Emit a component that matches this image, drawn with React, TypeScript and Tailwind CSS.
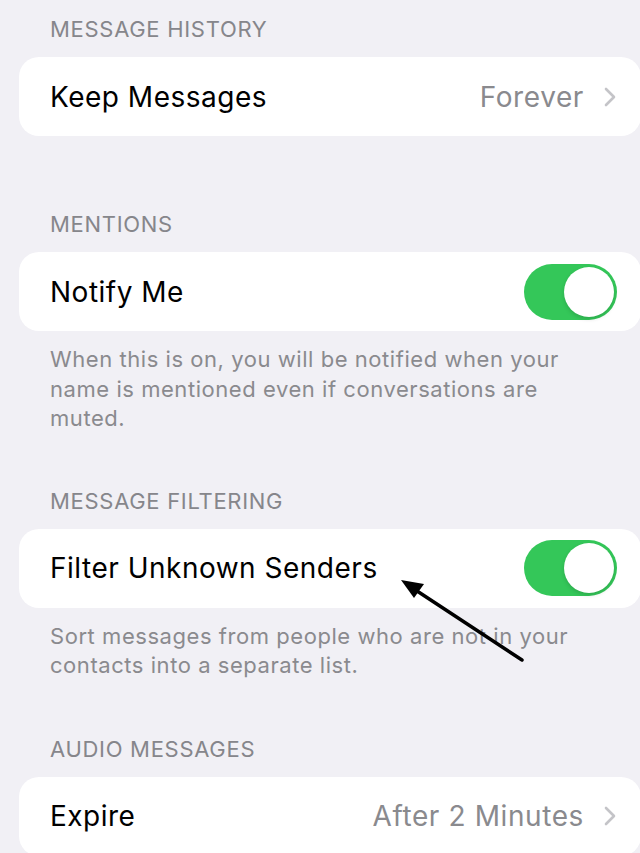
import React from "react";

type RowProps = {
  label: string;
  value?: string;
  toggle?: boolean;
};

function Chevron() {
  return (
    <svg width="13" height="20" viewBox="0 0 13 20" className="ml-[20px]">
      <polyline
        points="2,2 10,10 2,18"
        fill="none"
        stroke="#c4c4c8"
        strokeWidth="2.6"
        strokeLinecap="round"
        strokeLinejoin="round"
      />
    </svg>
  );
}

function Toggle() {
  return (
    <div className="w-[93px] h-[56px] rounded-full bg-[#34c759] p-[3px] flex justify-end">
      <div className="w-[50px] h-[50px] rounded-full bg-white shadow-[0_2px_4px_rgba(0,0,0,0.15)]" />
    </div>
  );
}

function Row({ label, value, toggle }: RowProps) {
  return (
    <div className="h-[79px] ml-[19px] -mr-[1px] bg-white rounded-[20px] flex items-center pl-[31px] pr-[24px]">
      <span className="flex-1 text-[28px] text-black tracking-[0.5px]">{label}</span>
      {value && (
        <span className="flex items-center text-[28px] text-[#8a8a8e] tracking-[0.6px]">
          {value}
          <Chevron />
        </span>
      )}
      {toggle && <Toggle />}
    </div>
  );
}

function Header({ children }: { children: React.ReactNode }) {
  return (
    <div className="pl-[50px] text-[22px] leading-[28px] tracking-[0.7px] text-[#86868b] mb-[14px]">
      {children}
    </div>
  );
}

function Footer({ children }: { children: React.ReactNode }) {
  return (
    <div className="pl-[50px] mt-[14px] text-[22px] leading-[29.5px] tracking-[0.55px] text-[#8a8a8e]">
      {children}
    </div>
  );
}

export default function App() {
  return (
    <div
      className="relative w-[640px] h-[853px] overflow-hidden bg-[#f1f0f5]"
      style={{ fontFamily: "Inter, 'Noto Sans', sans-serif" }}
    >
      <div className="pt-[15px]">
        <Header>MESSAGE HISTORY</Header>
        <Row label="Keep Messages" value="Forever" />

        <div className="mt-[74px]">
          <Header>MENTIONS</Header>
          <Row label="Notify Me" toggle />
          <Footer>
            When this is on, you will be notified when your
            <br />
            name is mentioned even if conversations are
            <br />
            muted.
          </Footer>
        </div>

        <div className="mt-[53px]">
          <Header>MESSAGE FILTERING</Header>
          <Row label="Filter Unknown Senders" toggle />
          <Footer>
            Sort messages from people who are not in your
            <br />
            contacts into a separate list.
          </Footer>
        </div>

        <div className="mt-[54px]">
          <Header>AUDIO MESSAGES</Header>
          <Row label="Expire" value="After 2 Minutes" />
        </div>
      </div>

      {/* hand-drawn annotation arrow */}
      <svg className="absolute inset-0 pointer-events-none" width="640" height="853">
        <line x1="522" y1="660" x2="414" y2="589" stroke="#000" strokeWidth="3.5" strokeLinecap="round" />
        <polygon points="401,580 424,584 414,598" fill="#000" />
      </svg>
    </div>
  );
}
